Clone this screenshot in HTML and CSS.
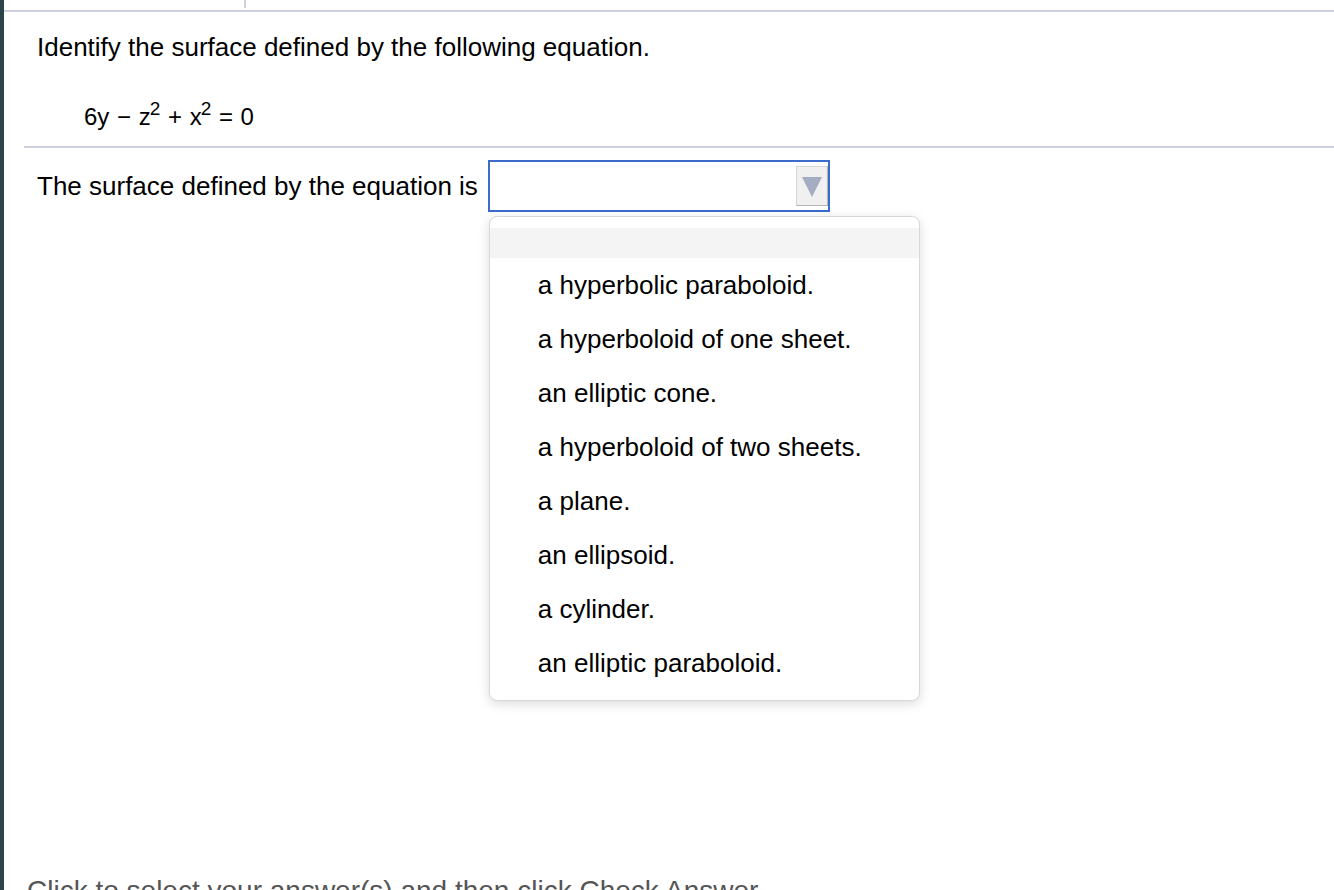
FILE: index.html
```html
<!DOCTYPE html>
<html>
<head>
  <title>Identify the surface</title>
  <link rel="stylesheet" href="styles.css">
</head>
<body>
  <div class="page">
    <div class="top-bar">
      <div class="tab"></div>
    </div>

    <div class="question">
      <p class="prompt">Identify the surface defined by the following equation.</p>
      <p class="equation">6y <span class="op">−</span> z<sup>2</sup> <span class="op">+</span> x<sup>2</sup> <span class="op">=</span> 0</p>
    </div>

    <div class="answer">
      <span class="answer-text">The surface defined by the equation is</span>
      <div class="select-wrap">
        <div class="select-box">
          <div class="select-arrow">
            <svg width="20" height="21" viewBox="0 0 20 21"><polygon points="0,1 20,1 10,21" fill="#a4adc1"/></svg>
          </div>
        </div>
        <div class="dropdown">
          <div class="dropdown-blank"></div>
          <div class="option">a hyperbolic paraboloid.</div>
          <div class="option">a hyperboloid of one sheet.</div>
          <div class="option">an elliptic cone.</div>
          <div class="option">a hyperboloid of two sheets.</div>
          <div class="option">a plane.</div>
          <div class="option">an ellipsoid.</div>
          <div class="option">a cylinder.</div>
          <div class="option">an elliptic paraboloid.</div>
        </div>
      </div>
    </div>

    <div class="spacer"></div>

    <p class="hint">Click to select your answer(s) and then click Check Answer.</p>
  </div>
</body>
</html>
```

FILE: styles.css
```css
html, body {
  margin: 0;
  padding: 0;
  height: 100%;
  overflow: hidden;
}

body {
  font-family: "Liberation Sans", Arial, sans-serif;
  background-color: #fff;
  color: #000;
  border-left: 4px solid #2d4548;
  box-sizing: border-box;
}

.page {
  display: flex;
  flex-direction: column;
  height: 100%;
}

.top-bar {
  height: 10px;
  border-bottom: 2px solid #cdd1de;
  position: relative;
}

.tab {
  position: absolute;
  left: 240px;
  top: 0;
  width: 2px;
  height: 8px;
  background-color: #cdd1de;
}

.question {
  margin-left: 20px;
  border-bottom: 2px solid #cdd1de;
  padding-bottom: 14px;
}

.prompt {
  margin: 20px 0 0 13px;
  font-size: 26px;
  line-height: 30px;
}

.equation {
  margin: 40px 0 0 60px;
  font-size: 24px;
  line-height: 30px;
}

.equation .op {
  margin: 0 1px;
}

.equation sup {
  font-size: 19px;
  line-height: 0;
  vertical-align: 0;
  position: relative;
  top: -10px;
  margin-left: -1px;
}

.answer {
  display: flex;
  align-items: center;
  margin: 12px 0 0 33px;
}

.answer-text {
  font-size: 26px;
  margin-right: 10px;
}

.select-wrap {
  position: relative;
}

.select-box {
  width: 338px;
  height: 48px;
  border: 2px solid #3b6ccc;
  display: flex;
  align-items: center;
  justify-content: flex-end;
}

.select-arrow {
  width: 30px;
  height: 38px;
  background-color: #f0f0f0;
  border: 1px solid #d6d6d6;
  border-right-color: #b4b4b4;
  border-bottom-color: #b4b4b4;
  display: flex;
  align-items: center;
  justify-content: center;
}

.dropdown {
  position: absolute;
  left: 1px;
  top: 56px;
  width: 429px;
  background-color: #fff;
  border: 1px solid #d8d8d8;
  border-radius: 8px;
  box-shadow: 0 3px 12px rgba(0, 0, 0, 0.14);
  padding: 11px 0 10px;
}

.dropdown-blank {
  height: 30px;
  background-color: #f4f4f4;
}

.option {
  font-size: 26px;
  line-height: 54px;
  padding-left: 48px;
}

.spacer {
  flex: 1;
}

.hint {
  margin: 0 0 -17px 23px;
  font-size: 28px;
  line-height: 32px;
  color: #555;
  white-space: nowrap;
}
```
